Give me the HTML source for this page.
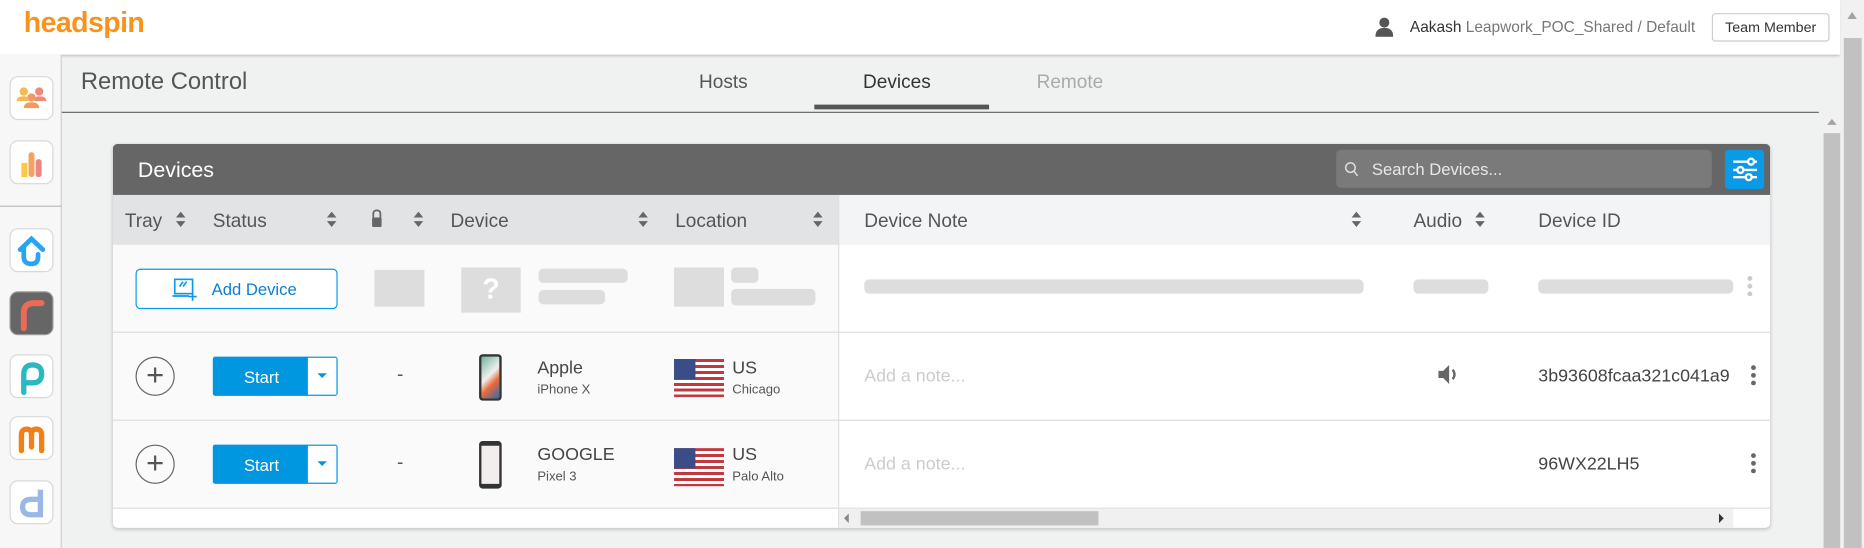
<!DOCTYPE html>
<html><head><meta charset="utf-8"><style>
*{box-sizing:border-box;margin:0;padding:0}
html,body{width:1864px;height:548px;overflow:hidden;background:#f0f1f1;font-family:"Liberation Sans",sans-serif}
#w{position:absolute;left:0;top:0;width:1568px;height:461px;transform:scale(1.18878);transform-origin:0 0;background:#f0f1f1}
.a{position:absolute}
.hdr{left:0;top:0;width:1548px;height:46px;background:#fff;box-shadow:0 1px 2px #bbb}
.side{left:0;top:46px;width:52px;height:415px;background:#f7f7f7;border-right:1px solid #d0d0d0}
.ib{position:absolute;left:8px;width:37px;height:37px;border:1px solid #d8d8d8;border-radius:7px;background:#fff;font-weight:bold;font-size:28px;text-align:center;line-height:32px}
.t{color:#555;font-size:16px}
.sm{font-size:11px;color:#555}
.ph{position:absolute;background:#ddd;border-radius:4px}
.srt{position:absolute;width:8px;height:14px}
.srt:before{content:"";position:absolute;left:0;top:0;border:4px solid transparent;border-bottom:5px solid #666;border-top:0}
.srt:after{content:"";position:absolute;left:0;top:8px;border:4px solid transparent;border-top:5px solid #666;border-bottom:0}
.btn{position:absolute;width:105px;height:33px;background:#0096e0;border:1px solid #0096e0;border-radius:2px;color:#fff;font-size:14px}
.btn span{position:absolute;left:0;width:80px;text-align:center;top:8px}
.btn i{position:absolute;right:0;top:0;width:24px;height:31px;background:#fff}
.btn i:after{content:"";position:absolute;left:8px;top:13px;border:4px solid transparent;border-top:4px solid #0096e0}
.plus{position:absolute;left:19px;width:33px;height:33px;border:1.5px solid #666;border-radius:50%;color:#555;font-size:26px;text-align:center;line-height:29px;font-weight:300}
.flag{position:absolute;width:42px;height:32px;background:repeating-linear-gradient(#c0393f 0 2.5px,#fff 2.5px 5px)}
.flag:before{content:"";position:absolute;left:0;top:0;width:18px;height:17px;background:#3b4d87}
.keb{position:absolute;width:4px;height:18px;background:radial-gradient(circle,#666 1.8px,transparent 2.2px) 0 0/4px 6.5px}
</style></head><body><div id="w">
<div class="a hdr"></div>
<div class="a" style="left:20px;top:6px;color:#f7941d;font-size:24px;font-weight:bold;letter-spacing:-0.5px">headspin</div>
<svg class="a" style="left:1157px;top:14px" width="15" height="17"><circle cx="7.5" cy="5" r="4.2" fill="#555"/><path d="M0 17 Q0 9.5 7.5 9.5 Q15 9.5 15 17Z" fill="#555"/></svg>
<div class="a" style="left:1186px;top:15px;font-size:13px;color:#333">Aakash <span style="color:#777">Leapwork_POC_Shared / Default</span></div>
<div class="a" style="left:1440px;top:11px;width:99px;height:24px;border:1px solid #ccc;border-radius:3px;font-size:12px;color:#333;text-align:center;line-height:22px;background:#fff">Team Member</div>
<div class="a" style="left:1549px;top:0;width:19px;height:461px;background:#f1f1f1"></div>
<div class="a" style="left:1551px;top:32px;width:15px;height:429px;background:#c1c1c1"></div>
<div class="a" style="left:1554px;top:10px;border:4px solid transparent;border-bottom:6px solid #a3a3a3;border-top:0"></div>
<div class="a" style="left:1533px;top:96px;width:16px;height:365px;background:#f1f1f1"></div>
<div class="a" style="left:1534px;top:112px;width:14px;height:349px;background:#c1c1c1"></div>
<div class="a" style="left:1537px;top:100px;border:4px solid transparent;border-bottom:5px solid #a3a3a3;border-top:0"></div>

<div class="a side"></div>
<div class="ib" style="top:64px"><svg width="35" height="35"><circle cx="11" cy="12" r="3.5" fill="#f7b84f"/><circle cx="24" cy="12" r="3.5" fill="#ef8a7a"/><circle cx="17.5" cy="17" r="3.5" fill="#f39a5f"/><path d="M5 20Q5 16 11 16Q14 16 15 18V20Z" fill="#f7b84f"/><path d="M30 20Q30 16 24 16Q21 16 20 18V20Z" fill="#ef8a7a"/><path d="M11 26Q11 21 17.5 21Q24 21 24 26Z" fill="#f39a5f"/></svg></div>
<div class="ib" style="top:118px"><svg width="35" height="35"><rect x="9" y="18" width="5" height="12" fill="#fdc844"/><rect x="15" y="9" width="5" height="21" rx="2.5" fill="#f3a261"/><rect x="21" y="15" width="5" height="15" rx="2" fill="#ee8585"/></svg></div>
<div class="a" style="left:0;top:173px;width:52px;height:1px;background:#bbb"></div>
<div class="ib" style="top:192px"><svg width="35" height="35"><path d="M8 17 L17.5 8 L27 17 M11 16 V23 Q11 29 17.5 29 Q23 29 23 23 V21" stroke="#29a3f5" stroke-width="4" fill="none" stroke-linecap="round"/></svg></div>
<div class="ib" style="top:245px;background:#666;border-color:#999"><svg width="35" height="35"><path d="M11 30 V17 Q11 9 20 9 H26" stroke="#ed6a56" stroke-width="5" fill="none" stroke-linecap="round"/></svg></div>
<div class="ib" style="top:298px"><svg width="35" height="35"><path d="M11 31 V16 Q11 8 18.5 8 Q26 8 26 15.5 Q26 23 18.5 23 H12" stroke="#2bb8c0" stroke-width="4.5" fill="none" stroke-linecap="round"/></svg></div>
<div class="ib" style="top:350px"><svg width="35" height="35"><path d="M9 28 V15 Q9 10 13.5 10 Q17.5 10 17.5 15 V25 M17.5 15 Q17.5 10 21.5 10 Q26 10 26 15 V28" stroke="#f57f17" stroke-width="4.5" fill="none" stroke-linecap="round"/></svg></div>
<div class="ib" style="top:404px"><svg width="35" height="35"><path d="M25 7 V28 H17.5 Q10 28 10 21.5 Q10 15 17.5 15 H25" stroke="#9bb7e8" stroke-width="4.5" fill="none"/></svg></div>

<div class="a" style="left:68px;top:58px;font-size:20px;color:#555">Remote Control</div>
<div class="a" style="left:588px;top:61px;font-size:16px;color:#555">Hosts</div>
<div class="a" style="left:726px;top:61px;font-size:16px;color:#333">Devices</div>
<div class="a" style="left:872px;top:61px;font-size:16px;color:#aaa">Remote</div>
<div class="a" style="left:685px;top:88px;width:147px;height:4px;background:#555"></div>
<div class="a" style="left:52px;top:94px;width:1478px;height:1px;background:#666"></div>

<div class="a" style="left:95px;top:121px;width:1394px;height:323px;background:#fff;border-radius:4px;box-shadow:0 1px 3px rgba(0,0,0,.2);overflow:hidden">
 <div class="a" style="left:0;top:0;width:1394px;height:43px;background:#666"></div>
 <div class="a" style="left:21px;top:12px;font-size:18px;color:#fff">Devices</div>
 <div class="a" style="left:1029px;top:5px;width:316px;height:32px;background:#7a7a7a;border-radius:4px"></div>
 <svg class="a" style="left:1036px;top:15px" width="12" height="13"><circle cx="5" cy="5" r="4" stroke="#ddd" stroke-width="1.3" fill="none"/><path d="M8 8 L11 12" stroke="#ddd" stroke-width="1.3"/></svg>
 <div class="a" style="left:1059px;top:13px;font-size:14px;color:#e8e8e8">Search Devices...</div>
 <div class="a" style="left:1356px;top:5px;width:33px;height:33px;background:#0a9ae6;border-radius:3px"></div>
 <svg class="a" style="left:1361px;top:10px" width="24" height="23"><g stroke="#fff" stroke-width="2" fill="#0a9ae6"><path d="M2 5H22M2 12H22M2 18H22"/><circle cx="17" cy="5" r="2.5"/><circle cx="8" cy="12" r="2.5"/><circle cx="15" cy="18" r="2.5"/></g></svg>
 <div class="a" style="left:0;top:43px;width:610px;height:42px;background:#e2e3e5"></div>
 <div class="a" style="left:610px;top:43px;width:784px;height:42px;background:#f3f4f6"></div>
 <div class="a t" style="left:10px;top:57px">Tray</div><div class="srt" style="left:53px;top:57px"></div>
 <div class="a t" style="left:84px;top:57px">Status</div><div class="srt" style="left:180px;top:57px"></div>
 <svg class="a" style="left:217px;top:55px" width="10" height="16"><path d="M2 7V4Q2 1 5 1Q8 1 8 4V7" stroke="#666" stroke-width="1.5" fill="none"/><rect x="1" y="7" width="8" height="8" rx="1" fill="#666"/></svg>
 <div class="srt" style="left:253px;top:57px"></div>
 <div class="a t" style="left:284px;top:57px">Device</div><div class="srt" style="left:442px;top:57px"></div>
 <div class="a t" style="left:473px;top:57px">Location</div><div class="srt" style="left:589px;top:57px"></div>
 <div class="a t" style="left:632px;top:57px">Device Note</div><div class="srt" style="left:1042px;top:57px"></div>
 <div class="a t" style="left:1094px;top:57px">Audio</div><div class="srt" style="left:1146px;top:57px"></div>
 <div class="a t" style="left:1199px;top:57px">Device ID</div>

 <div class="a" style="left:0;top:85px;width:610px;height:221px;background:#fafafa"></div>
 <div class="a" style="left:0;top:158px;width:1394px;height:1px;background:#ddd"></div>
 <div class="a" style="left:0;top:232px;width:1394px;height:1px;background:#ddd"></div>
 <div class="a" style="left:0;top:306px;width:1394px;height:1px;background:#ddd"></div>
 <div class="a" style="left:610px;top:43px;width:1px;height:280px;background:#ddd"></div>
 <!-- row1 -->
 <div class="a" style="left:19px;top:105px;width:170px;height:34px;border:1px solid #0a9ae6;border-radius:4px;background:#fff"></div>
 <svg class="a" style="left:50px;top:113px" width="22" height="20"><rect x="2" y="1" width="15" height="12" stroke="#0a9ae6" stroke-width="1.4" fill="none"/><path d="M0 15H14M17 12V19M13.5 15.5H20.5M6 7L9 3M9 7L12 3" stroke="#0a9ae6" stroke-width="1.4"/></svg>
 <div class="a" style="left:83px;top:114px;font-size:14px;color:#0a7fd0">Add Device</div>
 <div class="a" style="left:220px;top:106px;width:42px;height:31px;background:#ddd"></div>
 <div class="a" style="left:293px;top:104px;width:50px;height:38px;background:#ddd;color:#fff;font-size:24px;font-weight:bold;text-align:center;line-height:38px">?</div>
 <div class="ph" style="left:358px;top:105px;width:75px;height:12px"></div>
 <div class="ph" style="left:358px;top:123px;width:56px;height:12px"></div>
 <div class="a" style="left:472px;top:104px;width:42px;height:33px;background:#ddd"></div>
 <div class="ph" style="left:520px;top:104px;width:23px;height:13px"></div>
 <div class="ph" style="left:520px;top:122px;width:71px;height:14px"></div>
 <div class="ph" style="left:632px;top:114px;width:420px;height:12px"></div>
 <div class="ph" style="left:1094px;top:114px;width:63px;height:12px"></div>
 <div class="ph" style="left:1199px;top:114px;width:164px;height:12px"></div>
 <div class="keb" style="left:1375px;top:110px;opacity:.35"></div>
 <!-- row2 -->
 <div class="plus" style="top:179px">+</div>
 <div class="btn" style="left:84px;top:179px"><span>Start</span><i></i></div>
 <div class="a" style="left:239px;top:186px;color:#555">-</div>
 <div class="a" style="left:308px;top:177px;width:19px;height:39px;border-radius:3px;background:linear-gradient(135deg,#6fb59b,#f0f0f0 45%,#e96b3a 65%,#2c6bb3);border:2px solid #333"></div>
 <div class="a" style="left:357px;top:180px;font-size:15px;color:#444">Apple</div>
 <div class="a sm" style="left:357px;top:201px">iPhone X</div>
 <div class="flag" style="left:472px;top:181px"></div>
 <div class="a" style="left:521px;top:180px;font-size:15px;color:#444">US</div>
 <div class="a sm" style="left:521px;top:201px">Chicago</div>
 <div class="a" style="left:632px;top:187px;font-size:15px;color:#ccc">Add a note...</div>
 <svg class="a" style="left:1113px;top:184px" width="22" height="20"><path d="M2 7H6L11 2V18L6 13H2Z" fill="#666"/><path d="M14 6Q17 10 14 14" stroke="#666" stroke-width="2" fill="none"/></svg>
 <div class="a" style="left:1199px;top:187px;font-size:15px;color:#444;width:165px;overflow:hidden;white-space:nowrap">3b93608fcaa321c041a9</div>
 <div class="keb" style="left:1378px;top:185px"></div>
 <!-- row3 -->
 <div class="plus" style="top:253px">+</div>
 <div class="btn" style="left:84px;top:253px"><span>Start</span><i></i></div>
 <div class="a" style="left:239px;top:260px;color:#555">-</div>
 <div class="a" style="left:308px;top:250px;width:19px;height:40px;border-radius:3px;background:#f3eeee;border:2px solid #333;border-top-width:4px;border-bottom-width:4px"></div>
 <div class="a" style="left:357px;top:253px;font-size:15px;color:#444">GOOGLE</div>
 <div class="a sm" style="left:357px;top:274px">Pixel 3</div>
 <div class="flag" style="left:472px;top:256px"></div>
 <div class="a" style="left:521px;top:253px;font-size:15px;color:#444">US</div>
 <div class="a sm" style="left:521px;top:274px">Palo Alto</div>
 <div class="a" style="left:632px;top:261px;font-size:15px;color:#ccc">Add a note...</div>
 <div class="a" style="left:1199px;top:261px;font-size:15px;color:#444">96WX22LH5</div>
 <div class="keb" style="left:1378px;top:259px"></div>
 <!-- hscroll -->
 <div class="a" style="left:611px;top:307px;width:752px;height:16px;background:#f0f0f0"></div>
 <div class="a" style="left:629px;top:309px;width:200px;height:12px;background:#c1c1c1"></div>
 <div class="a" style="left:615px;top:311px;border:4px solid transparent;border-right:4px solid #888;border-left:0"></div>
 <div class="a" style="left:1351px;top:311px;border:4px solid transparent;border-left:4px solid #333;border-right:0"></div>
</div>
</div></body></html>
